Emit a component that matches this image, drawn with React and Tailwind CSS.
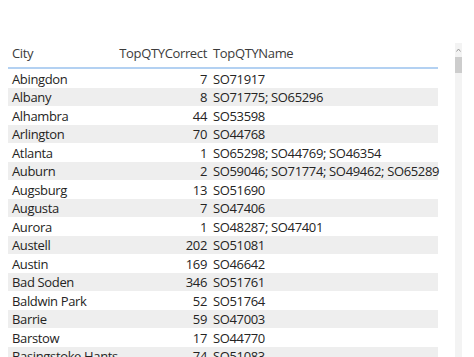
import React from "react";

const rows = [
  ["Abingdon", "7", "SO71917"],
  ["Albany", "8", "SO71775; SO65296"],
  ["Alhambra", "44", "SO53598"],
  ["Arlington", "70", "SO44768"],
  ["Atlanta", "1", "SO65298; SO44769; SO46354"],
  ["Auburn", "2", "SO59046; SO71774; SO49462; SO65289"],
  ["Augsburg", "13", "SO51690"],
  ["Augusta", "7", "SO47406"],
  ["Aurora", "1", "SO48287; SO47401"],
  ["Austell", "202", "SO51081"],
  ["Austin", "169", "SO46642"],
  ["Bad Soden", "346", "SO51761"],
  ["Baldwin Park", "52", "SO51764"],
  ["Barrie", "59", "SO47003"],
  ["Barstow", "17", "SO44770"],
  ["Basingstoke Hants", "74", "SO51083"],
];

const App = () => {
  return (
    <div
      className="relative w-[474px] h-[357px] overflow-hidden bg-white text-[13px] tracking-[-0.35px] text-[#252423]"
      style={{ fontFamily: '"Open Sans", "Noto Sans", sans-serif' }}
    >
      <div className="pt-[40px] pl-[8px] w-[438px]">
        {/* header */}
        <div className="grid grid-cols-[110px_89px_1fr] h-[29px] items-end pb-[7px] leading-none border-b-2 border-[#b3d1f2] text-[#3b3b3b]">
          <div className="pl-[4px]">City</div>
          <div className="text-right">TopQTYCorrect</div>
          <div className="pl-[6px]">TopQTYName</div>
        </div>
        {rows.map((r, i) => (
          <div
            key={r[0]}
            className={
              "grid grid-cols-[110px_89px_1fr] h-[18.5px] items-end pb-[2px] leading-none whitespace-nowrap " +
              (i % 2 === 1 ? "bg-[#eeeeee]" : "")
            }
          >
            <div className="pl-[4px]">{r[0]}</div>
            <div className="text-right">{r[1]}</div>
            <div className="pl-[6px]">{r[2]}</div>
          </div>
        ))}
      </div>

      {/* scrollbar */}
      <div className="absolute left-[455px] top-[43px] w-[7px] h-[320px] bg-[#f3f3f3]">
        <div className="flex justify-center pt-[5px]">
          <svg width="5" height="4" viewBox="0 0 5 4">
            <path d="M0.5 3.5 L2.5 1 L4.5 3.5" fill="none" stroke="#9a9a9a" strokeWidth="1" />
          </svg>
        </div>
        <div className="mt-[5px] h-[16px] bg-[#cdcdcd]" />
      </div>
    </div>
  );
};

export default App;
